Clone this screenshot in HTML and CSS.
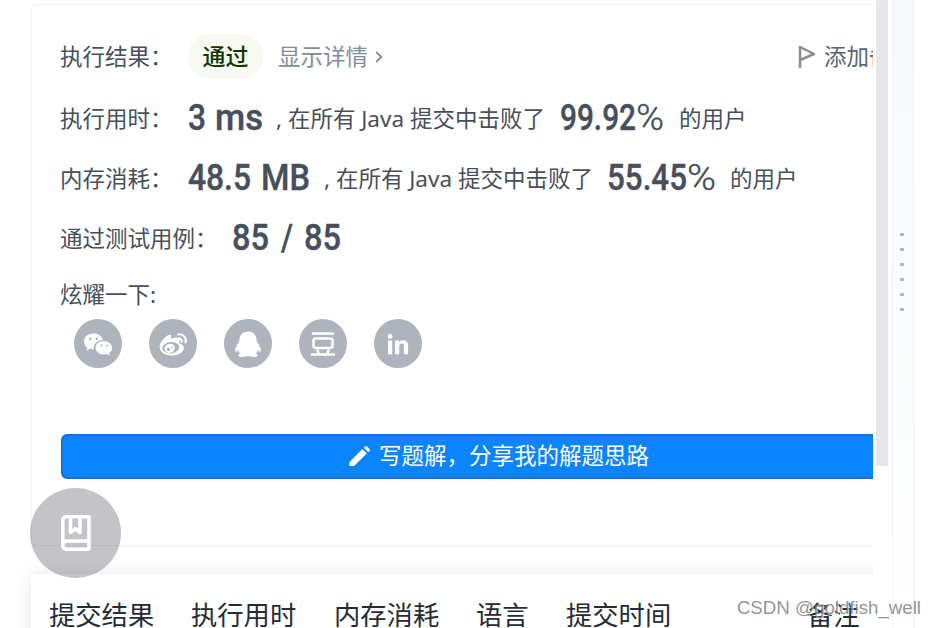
FILE: index.html
```html
<!DOCTYPE html>
<html lang="zh-CN">
<head>
  <meta charset="UTF-8">
  <meta name="viewport" content="width=device-width, initial-scale=1.0">
  <title>提交记录</title>
  <link rel="stylesheet" href="styles.css">
</head>
<body>
  <div class="page">
    <main class="panel">
      <section class="card">
        <div class="row row-status">
          <span class="label">执行结果：</span>
          <span class="pill">通过</span>
          <a class="detail">显示详情
            <svg width="8" height="14" viewBox="0 0 8 14"><path d="M1.2 2 6.3 7 1.2 12" fill="none" stroke="currentColor" stroke-width="1.8"/></svg>
          </a>
          <span class="note">
            <svg width="18" height="24" viewBox="0 0 18 24"><path d="M2 22V2L16 9 2 15" fill="none" stroke="#8c8c8c" stroke-width="2.5" stroke-linejoin="round" stroke-linecap="round"/></svg>
            添加备注
          </span>
        </div>

        <div class="row">
          <span class="label">执行用时：</span>
          <svg class="value" width="75" height="40"><text x="0" y="31" textLength="18" lengthAdjust="spacingAndGlyphs">3</text><text x="27" y="31" textLength="48" lengthAdjust="spacingAndGlyphs">ms</text></svg>
          <span class="text">, 在所有 Java 提交中击败了</span>
          <svg class="value" width="105" height="40"><text x="0" y="31" textLength="76" lengthAdjust="spacingAndGlyphs">99.92</text><text class="percent" x="76" y="31" textLength="28" lengthAdjust="spacingAndGlyphs">%</text></svg>
          <span class="tail">的用户</span>
        </div>

        <div class="row">
          <span class="label">内存消耗：</span>
          <svg class="value" width="123" height="40"><text x="0" y="31" textLength="63" lengthAdjust="spacingAndGlyphs">48.5</text><text x="73" y="31" textLength="49" lengthAdjust="spacingAndGlyphs">MB</text></svg>
          <span class="text">, 在所有 Java 提交中击败了</span>
          <svg class="value" width="108" height="40"><text x="-1" y="31" textLength="80" lengthAdjust="spacingAndGlyphs">55.45</text><text class="percent" x="79" y="31" textLength="29" lengthAdjust="spacingAndGlyphs">%</text></svg>
          <span class="tail">的用户</span>
        </div>

        <div class="row">
          <span class="label label-wide">通过测试用例：</span>
          <svg class="value" width="110" height="40"><text x="-1" y="31" textLength="37" lengthAdjust="spacingAndGlyphs">85</text><text x="48" y="31" textLength="12" lengthAdjust="spacingAndGlyphs">/</text><text x="71" y="31" textLength="37" lengthAdjust="spacingAndGlyphs">85</text></svg>
        </div>

        <div class="share-title">炫耀一下:</div>
        <div class="share">
          <span class="share-icon">
            <svg viewBox="0 0 48 48">
              <path fill="#fff" d="M19.500 14C14 14 10 17.600 10 22c0 2.500 1.300 4.700 3.400 6.200L12.600 31l3.500-1.700c1.200.3 2.400.5 3.800.4-1-5 3.500-9.400 9.200-9.200C28 16.500 24.200 14 19.500 14z"/>
              <path fill="#fff" d="M30 21.500c-4.700 0-8.400 3-8.400 6.800s3.700 6.800 8.400 6.800c1 0 2-.2 2.900-.5l2.900 1.600-.8-2.600c2-1.300 3-3.200 3-5.300 0-3.800-3.500-6.800-8-6.800z"/>
              <g fill="#afb3bd"><circle cx="16.200" cy="19.200" r="1.300"/><circle cx="23" cy="19.200" r="1.300"/><circle cx="27.300" cy="26" r="1"/><circle cx="32.800" cy="26" r="1"/></g>
            </svg>
          </span>
          <span class="share-icon">
            <svg viewBox="0 0 48 48">
              <path fill="#fff" d="M31 24.300c-.7-.2-1.100-.4-.8-1.200.8-2 .7-3.300-.3-4.200-1.300-1.200-4.500-1-7.400.3-.8.3-.7-.2-.5-.9.500-1.600.3-2.600-.4-2.900-2.500-1-11 6-11 11.900 0 5.100 5.300 8.700 12 8.700 7.200 0 12.300-3.900 12.300-7.300 0-2.300-1.800-3.800-3.900-4.400z"/>
              <ellipse cx="21.800" cy="28.200" rx="8.500" ry="5.700" fill="#afb3bd" transform="rotate(-6 21.800 28.200)"/>
              <ellipse cx="20.700" cy="28.800" rx="5.200" ry="4.500" fill="#fff" transform="rotate(-20 20.700 28.800)"/>
              <circle cx="19.400" cy="30" r="1.800" fill="#afb3bd"/><circle cx="22.700" cy="27.900" r=".8" fill="#afb3bd"/>
              <path d="M29 15c5-.9 9 3.300 7.500 8M29.800 19c2-.3 3.500 1.400 2.800 3.500" fill="none" stroke="#fff" stroke-width="2" stroke-linecap="round"/>
            </svg>
          </span>
          <span class="share-icon">
            <svg viewBox="0 0 48 48">
              <path fill="#fff" d="M24 12c-4.900 0-8.500 3.400-8.500 8 0 1.200-.4 2.300-1 3.200-2 2.900-3.300 5.500-3.300 8 0 1.300.9 1.600 2.800-.8.4 1.500 1.100 2.700 2.200 3.700-1.700.6-2.100 1.500-1.600 2.300.9 1.500 7.200 1.300 9.400-.1 2.200 1.400 8.500 1.600 9.400.1.500-.8.100-1.700-1.600-2.300 1.100-1 1.800-2.200 2.200-3.700 1.900 2.400 2.800 2.100 2.800.8 0-2.500-1.300-5.100-3.300-8-.6-.9-1-2-1-3.200 0-4.600-3.600-8-8.500-8z"/>
            </svg>
          </span>
          <span class="share-icon">
            <svg viewBox="0 0 48 48" fill="none" stroke="#fff" stroke-width="2.500" stroke-linecap="round">
              <path d="M14 14h20M13 35h22M18.500 31l1.700 4M29.500 31l-1.700 4"/>
              <rect x="14.500" y="19" width="19" height="9.500" rx="2.500"/>
            </svg>
          </span>
          <span class="share-icon">
            <svg viewBox="0 0 48 48">
              <path fill="#fff" d="M14 21h4.200v13.800H14zM21 21h4v1.900c.8-1.400 2.300-2.200 4.200-2.200 3.500 0 4.900 2.300 4.900 5.700v8.400h-4.200v-7.500c0-2-.6-3.200-2.100-3.200-1.800 0-2.600 1.300-2.600 3.200v7.500H21z"/>
              <circle cx="16.100" cy="17" r="2.400" fill="#fff"/>
            </svg>
          </span>
        </div>

        <button class="write">
          <svg width="22" height="22" viewBox="0 0 22 22" fill="#fff"><path d="M.5 17 13.300 4l4.500 4.500L5 21H.5zM14.800 2.700 16 1.500q1-1 2 0l2.500 2.500q1 1 0 2L19.300 7.200z"/></svg>
          <span>写题解，分享我的解题思路</span>
        </button>
      </section>

      <div class="table-head">
        <span class="col-result">提交结果</span>
        <span class="col-time">执行用时</span>
        <span class="col-memory">内存消耗</span>
        <span class="col-lang">语言</span>
        <span class="col-date">提交时间</span>
        <span class="col-note">备注</span>
      </div>
    </main>

    <div class="scrollbar"></div>
    <div class="splitter">
      <i></i><i></i><i></i><i></i><i></i><i></i>
    </div>
  </div>

  <div class="float-button">
    <svg width="32" height="38" viewBox="0 0 32 38" fill="none" stroke="#fff" stroke-width="3.600" stroke-linejoin="round">
      <path d="M6.500 2.800H29V35.200H7Q2.800 35.200 2.800 31V6.500Q2.800 2.800 6.500 2.800z"/>
      <path d="M3.500 29Q4.500 27 8 27H29"/>
      <path d="M10.500 3V18.500L15.500 14.800 20 18.500V3"/>
    </svg>
  </div>
  <div class="watermark">CSDN @goldfish_well</div>
</body>
</html>
```
FILE: styles.css
```css
* { margin: 0; padding: 0; box-sizing: border-box; }
body { width: 936px; height: 628px; overflow: hidden; position: relative; background: #fff; color: #474f5b; font-family: "Noto Sans", "Noto Sans CJK SC", sans-serif; font-size: 22.5px; }
svg { display: block; flex: none; }

.page { display: flex; height: 628px; }
.panel { width: 873px; padding: 4px 0 0 31px; overflow: hidden; flex: none; }

.card { width: 900px; height: 542px; padding: 22px 28px 0 28px; border: 1px solid #f0f0f1; border-radius: 6px; }
.row { display: flex; align-items: center; height: 60px; line-height: 34px; white-space: nowrap; }
.row-status { height: 62px; padding-bottom: 3px; }
.label { width: 128px; flex: none; }
.label-wide { width: 173px; }
.pill { width: 75px; height: 45px; flex: none; line-height: 44px; border-radius: 23px; background: #f6faf2; color: #133600; font-size: 23px; font-weight: 500; text-align: center; }
.detail { display: flex; align-items: center; gap: 7px; margin-left: 15px; color: #858c99; }
.note { display: flex; flex: none; align-items: center; gap: 8px; margin-left: 415px; color: #5c6470; }
.value { overflow: visible; }
.value text { font-family: Roboto, sans-serif; font-size: 36px; font-weight: 500; fill: #474f5b; stroke: #474f5b; stroke-width: 0.4px; }
.value .percent { font-weight: 300; }
.text { margin: 0 15px 0 13px; }
.tail { margin-left: 14px; }

.share-title { height: 50px; line-height: 52px; }
.share { display: flex; gap: 27px; padding-left: 14px; }
.share-icon { width: 48px; height: 49px; border-radius: 50%; background: #afb3bd; overflow: hidden; }
.share-icon svg { width: 48px; height: 49px; }

.write { display: flex; align-items: center; width: 900px; height: 45px; margin: 66px 0 0 1px; padding: 0 0 1px 286px; gap: 8px; border: 2px solid #1073dc; border-radius: 6px; background: #0a84ff; color: #fff; font: 22.5px/40px "Noto Sans", "Noto Sans CJK SC", sans-serif; white-space: nowrap; }

.table-head { display: flex; width: 900px; height: 80px; margin-top: 28px; padding: 20px 0 0 18px; background: #fff; box-shadow: 0 0 16px rgba(0,0,0,0.1); color: #262c36; font: 26.3px/39px "Noto Sans CJK SC", sans-serif; white-space: nowrap; }
.col-result { width: 142px; }
.col-time { width: 143px; }
.col-memory { width: 142px; }
.col-lang { width: 90px; }
.col-date { width: 241px; }

.scrollbar { width: 12px; height: 466px; margin-left: 3px; background: #e5e7eb; }
.splitter { display: flex; flex-direction: column; gap: 12px; align-items: center; width: 22px; margin-left: 4px; padding: 233px 2px 0 0; border-left: 1px solid #eff1f3; border-right: 1px solid #eff1f3; background: linear-gradient(#f6f8fb, #fafcfd 50%, #fff); }
.splitter i { width: 4px; height: 3px; border-radius: 1px; background: #afb3bd; }

.float-button { position: absolute; left: 30px; top: 488px; width: 91px; height: 90px; padding-left: 1px; display: flex; align-items: center; justify-content: center; border-radius: 50%; background: rgba(58,60,72,0.3); }
.watermark { position: absolute; right: 15px; bottom: 8px; font: 18.7px/24px "Liberation Sans", sans-serif; color: rgba(120,120,120,0.8); text-shadow: 1px 1px 0 rgba(255,255,255,0.7); }
```
